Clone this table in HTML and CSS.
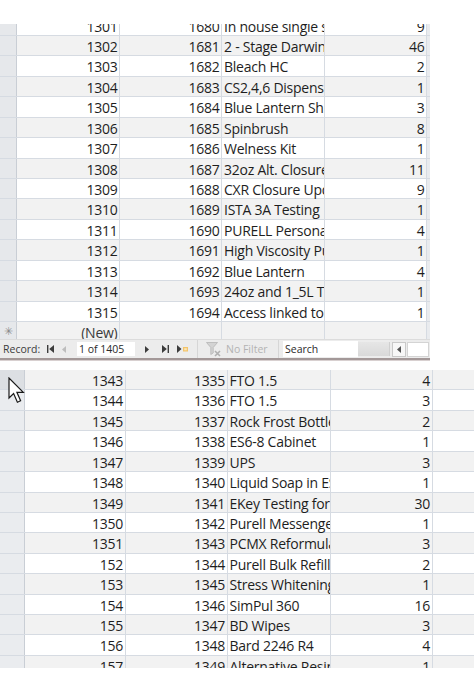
FILE: index.html
```html
<!DOCTYPE html>
<html>
<head>
<meta charset="utf-8">
<link rel="stylesheet" href="styles.css">
</head>
<body>
<div class="page">
  <div class="upper">
    <div class="clip-top">
      <div class="sheet sheet-top">
        <div class="row r-top"><div class="sel"></div><div class="num">1301</div><div class="num">1680</div><div class="txt">In house single source</div><div class="num">9</div><div class="tail"></div></div>
        <div class="row r-top alt"><div class="sel"></div><div class="num">1302</div><div class="num">1681</div><div class="txt">2 - Stage Darwin</div><div class="num">46</div><div class="tail"></div></div>
        <div class="row r-top"><div class="sel"></div><div class="num">1303</div><div class="num">1682</div><div class="txt">Bleach HC</div><div class="num">2</div><div class="tail"></div></div>
        <div class="row r-top alt"><div class="sel"></div><div class="num">1304</div><div class="num">1683</div><div class="txt">CS2,4,6 Dispenser</div><div class="num">1</div><div class="tail"></div></div>
        <div class="row r-top"><div class="sel"></div><div class="num">1305</div><div class="num">1684</div><div class="txt">Blue Lantern Shipper</div><div class="num">3</div><div class="tail"></div></div>
        <div class="row r-top alt"><div class="sel"></div><div class="num">1306</div><div class="num">1685</div><div class="txt">Spinbrush</div><div class="num">8</div><div class="tail"></div></div>
        <div class="row r-top"><div class="sel"></div><div class="num">1307</div><div class="num">1686</div><div class="txt">Welness Kit</div><div class="num">1</div><div class="tail"></div></div>
        <div class="row r-top alt"><div class="sel"></div><div class="num">1308</div><div class="num">1687</div><div class="txt">32oz Alt. Closure</div><div class="num">11</div><div class="tail"></div></div>
        <div class="row r-top"><div class="sel"></div><div class="num">1309</div><div class="num">1688</div><div class="txt">CXR Closure Update</div><div class="num">9</div><div class="tail"></div></div>
        <div class="row r-top alt"><div class="sel"></div><div class="num">1310</div><div class="num">1689</div><div class="txt">ISTA 3A Testing</div><div class="num">1</div><div class="tail"></div></div>
        <div class="row r-top"><div class="sel"></div><div class="num">1311</div><div class="num">1690</div><div class="txt">PURELL Personal</div><div class="num">4</div><div class="tail"></div></div>
        <div class="row r-top alt"><div class="sel"></div><div class="num">1312</div><div class="num">1691</div><div class="txt">High Viscosity Pump</div><div class="num">1</div><div class="tail"></div></div>
        <div class="row r-top"><div class="sel"></div><div class="num">1313</div><div class="num">1692</div><div class="txt">Blue Lantern</div><div class="num">4</div><div class="tail"></div></div>
        <div class="row r-top alt"><div class="sel"></div><div class="num">1314</div><div class="num">1693</div><div class="txt">24oz and 1_5L Trigger</div><div class="num">1</div><div class="tail"></div></div>
        <div class="row r-top"><div class="sel"></div><div class="num">1315</div><div class="num">1694</div><div class="txt">Access linked to</div><div class="num">1</div><div class="tail"></div></div>
        <div class="row r-top alt"><div class="sel star">&#x2733;</div><div class="num new">(New)</div><div class="num"></div><div class="txt"></div><div class="num"></div><div class="tail"></div></div>
      </div>
    </div>
    <div class="nav">
      <span class="nav-label">Record:</span>
      <span class="nbtn nb-first"><svg width="7" height="8" viewBox="0 0 7 8"><rect x="0" y="0" width="1.4" height="8" fill="#3c3c3c"/><path d="M7 0 L2.2 4 L7 8 Z" fill="#3c3c3c"/></svg></span>
      <span class="nbtn nb-prev"><svg width="4" height="7" viewBox="0 0 4 7"><path d="M4 0 L0 3.5 L4 7 Z" fill="#bdbdbd"/></svg></span>
      <span class="nav-box">1 of 1405</span>
      <span class="nbtn nb-next"><svg width="4" height="7" viewBox="0 0 4 7"><path d="M0 0 L4 3.5 L0 7 Z" fill="#3c3c3c"/></svg></span>
      <span class="nbtn nb-last"><svg width="7" height="8" viewBox="0 0 7 8"><path d="M0 0 L4.8 4 L0 8 Z" fill="#3c3c3c"/><rect x="5.6" y="0" width="1.4" height="8" fill="#3c3c3c"/></svg></span>
      <span class="nbtn nb-new"><svg width="12" height="8" viewBox="0 0 12 8"><path d="M0 0 L4.5 4 L0 8 Z" fill="#3c3c3c"/><rect x="6" y="2" width="5" height="4.5" fill="#f3c46b"/><rect x="7.2" y="3.2" width="2.6" height="2.1" fill="#fbe7b8"/></svg></span>
      <span class="nsep"></span>
      <span class="nbtn nb-filter"><svg width="16" height="16" viewBox="0 0 16 16"><path d="M0.5 1.5 L11.5 1.5 L7.2 6.5 L7.2 12 L4.8 13.5 L4.8 6.5 Z" fill="#d3d3d3" stroke="#b5b5b5" stroke-width="0.8"/><path d="M9 10 L14 15 M14 10 L9 15" stroke="#b0b0b0" stroke-width="1.6"/></svg></span>
      <span class="nav-nofilter">No Filter</span>
      <span class="nsep"></span>
      <span class="nav-search">Search</span>
      <span class="nav-gap"></span>
      <span class="nav-scroll"><svg width="4" height="7" viewBox="0 0 4 7"><path d="M4 0 L0 3.5 L4 7 Z" fill="#555"/></svg></span>
      <span class="nav-track"></span>
    </div>
    <div class="navline"></div>
  </div>

  <div class="clip-bottom">
    <div class="sheet sheet-bottom">
      <div class="row r-bot alt"><div class="sel hover"></div><div class="num">1343</div><div class="num">1335</div><div class="txt">FTO 1.5</div><div class="num">4</div><div class="tail"></div></div>
      <div class="row r-bot"><div class="sel"></div><div class="num">1344</div><div class="num">1336</div><div class="txt">FTO 1.5</div><div class="num">3</div><div class="tail"></div></div>
      <div class="row r-bot alt"><div class="sel"></div><div class="num">1345</div><div class="num">1337</div><div class="txt">Rock Frost Bottle</div><div class="num">2</div><div class="tail"></div></div>
      <div class="row r-bot"><div class="sel"></div><div class="num">1346</div><div class="num">1338</div><div class="txt">ES6-8 Cabinet</div><div class="num">1</div><div class="tail"></div></div>
      <div class="row r-bot alt"><div class="sel"></div><div class="num">1347</div><div class="num">1339</div><div class="txt">UPS</div><div class="num">3</div><div class="tail"></div></div>
      <div class="row r-bot"><div class="sel"></div><div class="num">1348</div><div class="num">1340</div><div class="txt">Liquid Soap in ES</div><div class="num">1</div><div class="tail"></div></div>
      <div class="row r-bot alt"><div class="sel"></div><div class="num">1349</div><div class="num">1341</div><div class="txt">EKey Testing for</div><div class="num">30</div><div class="tail"></div></div>
      <div class="row r-bot"><div class="sel"></div><div class="num">1350</div><div class="num">1342</div><div class="txt">Purell Messenger</div><div class="num">1</div><div class="tail"></div></div>
      <div class="row r-bot alt"><div class="sel"></div><div class="num">1351</div><div class="num">1343</div><div class="txt">PCMX Reformulation</div><div class="num">3</div><div class="tail"></div></div>
      <div class="row r-bot"><div class="sel"></div><div class="num">152</div><div class="num">1344</div><div class="txt">Purell Bulk Refill</div><div class="num">2</div><div class="tail"></div></div>
      <div class="row r-bot alt"><div class="sel"></div><div class="num">153</div><div class="num">1345</div><div class="txt">Stress Whitening</div><div class="num">1</div><div class="tail"></div></div>
      <div class="row r-bot"><div class="sel"></div><div class="num">154</div><div class="num">1346</div><div class="txt">SimPul 360</div><div class="num">16</div><div class="tail"></div></div>
      <div class="row r-bot alt"><div class="sel"></div><div class="num">155</div><div class="num">1347</div><div class="txt">BD Wipes</div><div class="num">3</div><div class="tail"></div></div>
      <div class="row r-bot"><div class="sel"></div><div class="num">156</div><div class="num">1348</div><div class="txt">Bard 2246 R4</div><div class="num">4</div><div class="tail"></div></div>
      <div class="row r-bot alt"><div class="sel"></div><div class="num">157</div><div class="num">1349</div><div class="txt">Alternative Resin</div><div class="num">1</div><div class="tail"></div></div>
    </div>
  </div>

  <svg class="pointer" width="18" height="27" viewBox="0 0 18 27"><path d="M1 1 L1 21 L5.6 16.6 L9.4 25.2 L12.6 23.8 L8.9 15.3 L15.3 15.3 Z" fill="#fff" stroke="#1a1a1a" stroke-width="1.2" stroke-linejoin="miter"/></svg>
</div>
</body>
</html>
```

FILE: styles.css
```css
html, body {
  margin: 0;
  padding: 0;
  background: #ffffff;
}

.page {
  position: relative;
  width: 474px;
  height: 675px;
  overflow: hidden;
  font-family: "Open Sans", "Noto Sans", sans-serif;
  color: #1e1e1e;
}

.upper {
  padding-top: 24px;
  width: 430px;
}

.clip-top {
  height: 315px;
  overflow: hidden;
}

.sheet-top {
  margin-top: -8.4px;
}

.row {
  display: grid;
  height: 20.43px;
  box-sizing: border-box;
  border-bottom: 1px solid #d6dbe2;
  background: #ffffff;
  font-size: 14px;
  letter-spacing: -0.25px;
  line-height: 14px;
}

.row.alt {
  background: #f2f2f2;
}

.r-top {
  grid-template-columns: 17px 103px 102px 103px 102px 3px;
}

.r-bot {
  grid-template-columns: 25px 101px 102px 103px 102px 1fr;
}

.row > div {
  box-sizing: border-box;
  border-right: 1px solid #d6dbe2;
  overflow-x: clip;
  overflow-y: visible;
  white-space: nowrap;
  padding-top: 4px;
}

.row > .tail {
  border-right: none;
}

.r-top > .tail {
  background: #e9ebee;
}

.sel {
  background: #e6e8eb;
  border-right-color: #c9ced5 !important;
}

.r-bot .sel {
  background: #eaecef;
}

.r-bot .sel.hover {
  background: #dcdfe3;
}

.row > .star {
  color: #8a8a8a;
  font-size: 11px;
  line-height: 12px;
  text-align: center;
  padding-top: 3px;
}

.num {
  text-align: right;
  padding-right: 1.5px;
}

.num.new {
  color: #3a3a3a;
}

.txt {
  padding-left: 2px;
}

.r-bot .txt {
  padding-left: 1.5px;
}

.r-bot .num {
  padding-right: 2px;
}

/* navigation bar */
.nav {
  display: flex;
  align-items: center;
  height: 19px;
  background: #ececec;
  font-size: 10.5px;
  color: #3c3c3c;
  border-top: 1px solid #dcdcdc;
  box-sizing: border-box;
}

.nav-label {
  width: 44px;
  padding-left: 3px;
  box-sizing: border-box;
}

.nbtn {
  display: flex;
  align-items: center;
  justify-content: center;
  height: 100%;
}

.nb-first { width: 13px; }
.nb-prev { width: 20px; justify-content: flex-start; padding-left: 5px; box-sizing: border-box; }

.nav-box {
  width: 58px;
  height: 14px;
  background: #ffffff;
  padding-left: 2px;
  box-sizing: border-box;
  line-height: 14px;
  color: #2a2a2a;
}

.nb-next { width: 23px; }
.nb-last { width: 14px; }
.nb-new { width: 21px; }

.nsep {
  width: 8px;
  height: 100%;
}

.nsep::after {
  content: "";
  display: block;
  width: 1px;
  height: 100%;
  margin-left: 4px;
  background: #d6d6d6;
}

.nb-filter {
  width: 23px;
  justify-content: flex-start;
  padding-left: 5px;
  box-sizing: border-box;
}

.nav-nofilter {
  width: 50px;
  padding-left: 2px;
  box-sizing: border-box;
  color: #b3b3b3;
}

.nav-search {
  margin-left: 1px;
  width: 75px;
  height: 16px;
  line-height: 16px;
  background: #ffffff;
  padding-left: 2px;
  box-sizing: border-box;
  color: #2a2a2a;
}

.nav-gap {
  width: 31px;
  height: 14px;
  background: linear-gradient(#e6e6e6, #d9d9d9);
  border-right: 1px solid #cfcfcf;
}

.nav-scroll {
  margin-left: 2px;
  width: 14px;
  height: 15px;
  display: flex;
  align-items: center;
  justify-content: center;
  background: #f7f7f7;
  border: 1px solid #c9c9c9;
  box-sizing: border-box;
}

.nav-track {
  margin-left: 1px;
  width: 22px;
  height: 15px;
  background: #ffffff;
  border: 1px solid #d4d4d4;
  box-sizing: border-box;
}

.navline {
  height: 2px;
  background: #a39898;
  border-bottom: 1px solid #d8d0d0;
}

.clip-bottom {
  margin-top: 9px;
  height: 298px;
  overflow: hidden;
}

.pointer {
  position: absolute;
  left: 8px;
  top: 377px;
}
```
